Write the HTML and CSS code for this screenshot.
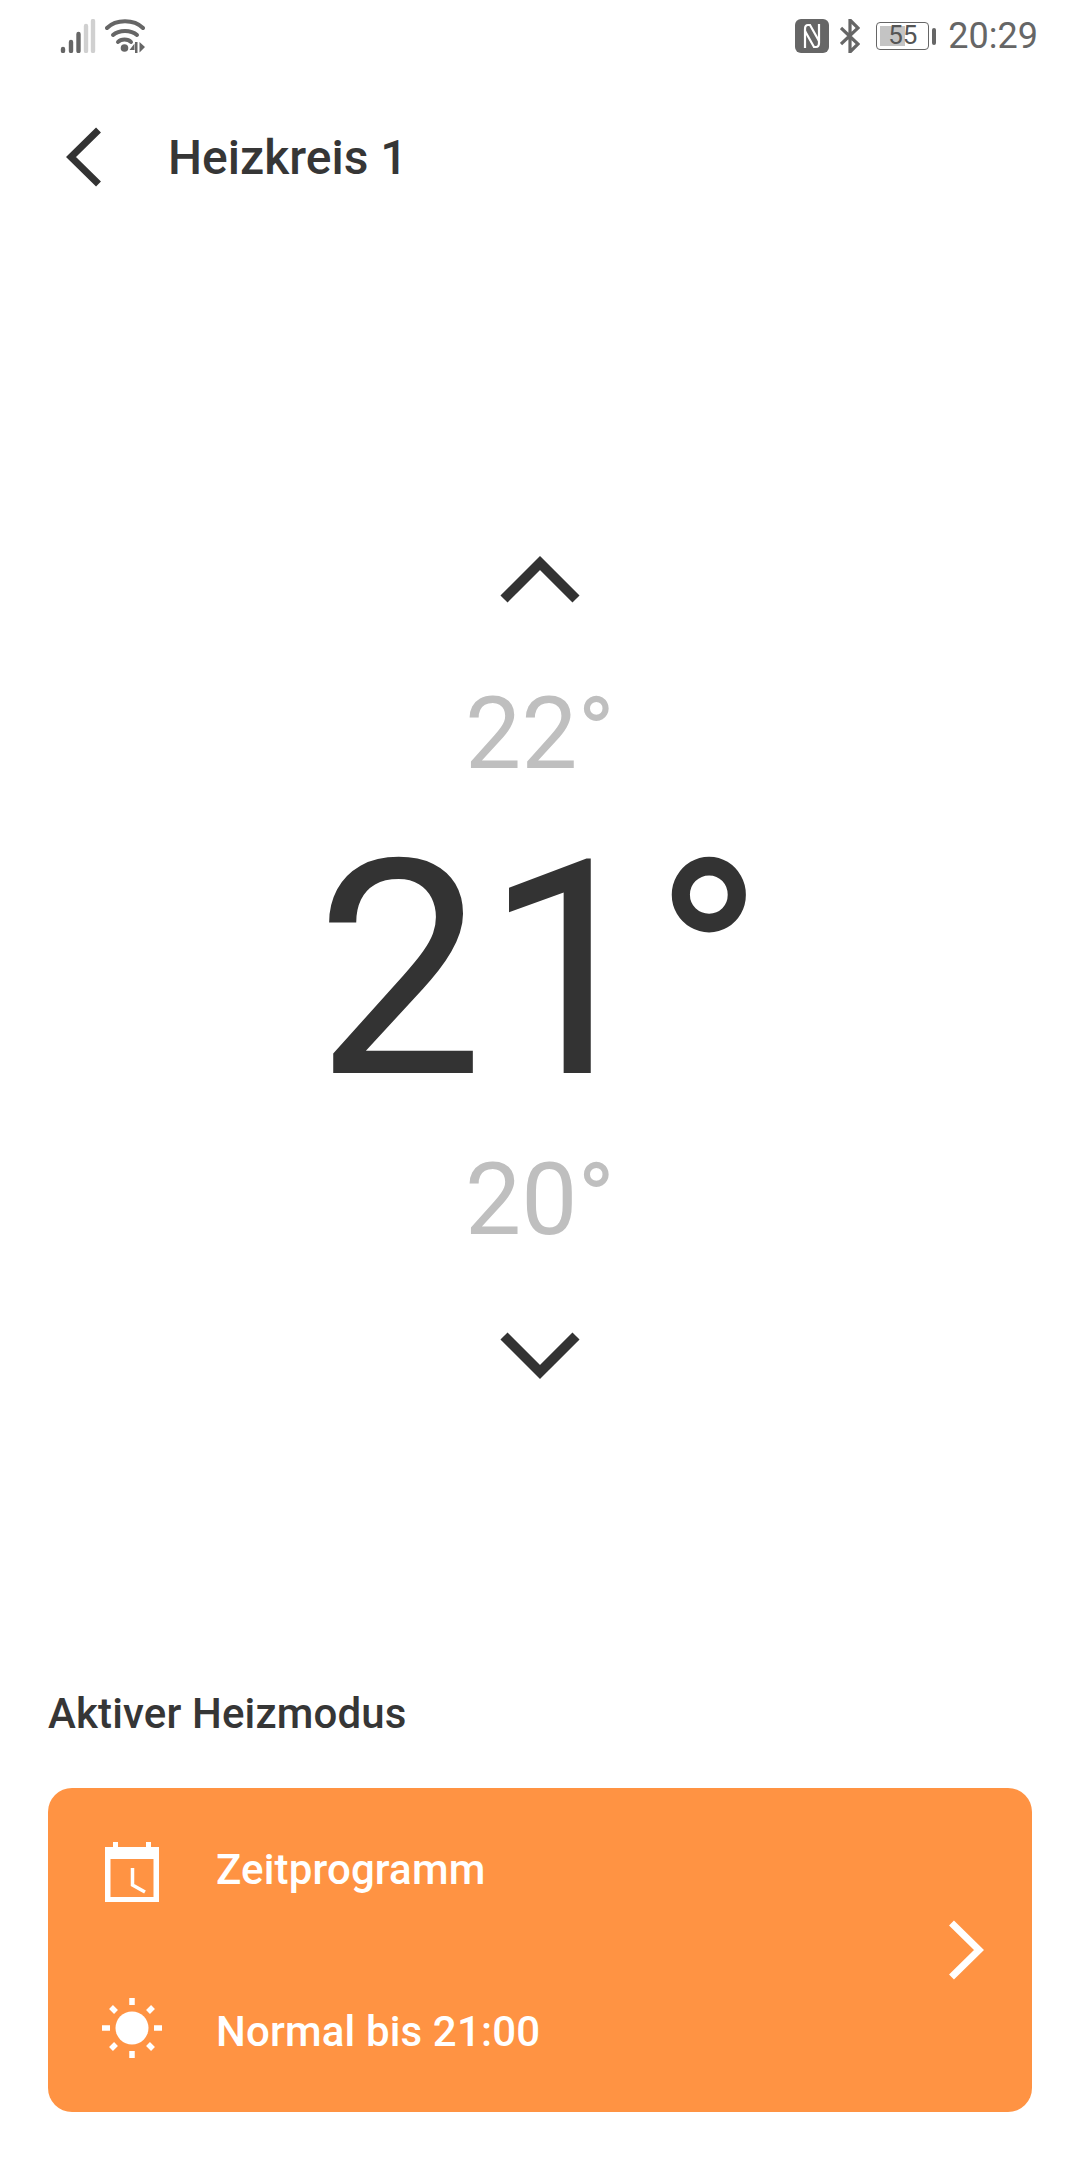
FILE: index.html
```html
<!DOCTYPE html>
<html lang="de">
<head>
  <meta charset="UTF-8" />
  <title>Heizkreis 1</title>
  <link rel="stylesheet" href="styles.css">
</head>
<body>

<div class="status-bar">
  <div class="status-left">
    <svg class="icon-signal" width="36" height="34" viewBox="0 0 36 34">
      <g fill="none" stroke-width="4.4" stroke-linecap="round">
        <path d="M3 30v2" stroke="#666"/>
        <path d="M11 23v9" stroke="#666"/>
        <path d="M18.500 15v17" stroke="#666"/>
        <path d="M26 7v25" stroke="#d0d0d0"/>
        <path d="M33 2v30" stroke="#d0d0d0"/>
      </g>
    </svg>
    <svg class="icon-wifi" width="40" height="34" viewBox="0 0 40 34">
      <g fill="none" stroke="#666" stroke-width="4" stroke-linecap="round">
        <path d="M2 9C11 0 29 0 38 9"/>
        <path d="M8 16C14 10.500 26 10.500 32 16"/>
        <path d="M13 23C16 19.500 23 19.500 26 23"/>
      </g>
      <circle cx="19.500" cy="29" r="3.800" fill="#666"/>
      <path d="M30 23v11h2.500V23zM24.500 31l5-6.500V31zM34.500 23l5.500 5-5.500 5.500z" fill="#666"/>
    </svg>
  </div>
  <div class="status-right">
    <svg width="34" height="34" viewBox="0 0 34 34">
      <rect width="34" height="34" rx="6" fill="#666"/>
      <g fill="none" stroke="#fff" stroke-width="2.200">
        <path d="M10 29V10Q10 6 13 6h2l9 16"/>
        <path d="M24 5v19q0 4-3 4h-2l-9-16"/>
      </g>
    </svg>
    <svg class="icon-bt" width="20" height="34" viewBox="0 0 20 34">
      <path d="M1 9l17 16-8 8V1l8 8L1 25" fill="none" stroke="#666" stroke-width="3.200"/>
    </svg>
    <div class="battery">
      <div class="battery-body">
        <div class="battery-fill" style="width: 55%"></div>
        <span class="battery-text">55</span>
      </div>
      <div class="battery-cap"></div>
    </div>
    <span class="clock">20:29</span>
  </div>
</div>

<header class="title-bar">
  <svg width="36" height="60" viewBox="0 0 36 60">
    <path d="M32.500 3L5 30l27.500 27" fill="none" stroke="#333" stroke-width="7"/>
  </svg>
  <h1>Heizkreis 1</h1>
</header>

<main class="picker">
  <svg class="arrow" width="80" height="50" viewBox="0 0 80 50">
    <path d="M4 45L40 9l36 36" fill="none" stroke="#333" stroke-width="10"/>
  </svg>
  <div class="temp-small temp-next">22°</div>
  <div class="temp-main">21°</div>
  <div class="temp-small temp-prev">20°</div>
  <svg class="arrow arrow-down" width="80" height="48" viewBox="0 0 80 48">
    <path d="M4 4l36 36L76 4" fill="none" stroke="#333" stroke-width="10"/>
  </svg>
</main>

<section class="mode">
  <h2>Aktiver Heizmodus</h2>
  <div class="mode-card">
    <div class="mode-rows">
      <div class="mode-row">
        <div class="mode-icon">
          <svg width="54" height="60" viewBox="0 0 54 60">
            <path d="M8 0h5v5h28V0h5v5h8v55H0V5h8z M5.500 17v38h43V17z" fill="#fff" fill-rule="evenodd"/>
            <path d="M27.500 26v17l12.500 7" fill="none" stroke="#fff" stroke-width="3.500"/>
          </svg>
        </div>
        <span class="mode-label-top">Zeitprogramm</span>
      </div>
      <div class="mode-row">
        <div class="mode-icon">
          <svg width="60" height="60" viewBox="0 0 60 60">
            <circle cx="30" cy="30" r="16.500" fill="#fff"/>
            <g fill="none" stroke="#fff" stroke-width="5.500">
              <path d="M30 0v7M30 53v7M0 30h8M52 30h8"/>
              <path d="M9 9l5 5M46 46l5 5M51 9l-5 5M14 46l-5 5"/>
            </g>
          </svg>
        </div>
        <span class="mode-label-bottom">Normal bis 21:00</span>
      </div>
    </div>
    <svg class="mode-go" width="36" height="60" viewBox="0 0 36 60">
      <path d="M3.500 3L31 30 3.500 57" fill="none" stroke="#fff" stroke-width="7"/>
    </svg>
  </div>
</section>

</body>
</html>
```

FILE: styles.css
```css
* {
  box-sizing: border-box;
  margin: 0;
  padding: 0;
}

body {
  width: 1080px;
  height: 2160px;
  background: #fff;
  color: #333;
  font-family: Roboto, sans-serif;
  overflow: hidden;
}

.status-bar {
  height: 60px;
  padding: 19px 42px 0 60px;
  display: flex;
  justify-content: space-between;
  align-items: flex-start;
}

.status-left, .status-right {
  display: flex;
  align-items: center;
}

.icon-wifi {
  margin-left: 9px;
}

.icon-bt {
  margin-left: 11px;
}

.battery {
  display: flex;
  align-items: center;
  margin-left: 16px;
  gap: 3px;
}

.battery-body {
  position: relative;
  width: 53px;
  height: 28px;
  border: 1.500px solid #666;
  border-radius: 4px;
  padding: 3px;
}

.battery-fill {
  height: 100%;
  background: #c4c4c4;
}

.battery-text {
  position: absolute;
  inset: 0;
  text-align: center;
  font-size: 26px;
  line-height: 25px;
  color: #555;
}

.battery-cap {
  width: 4px;
  height: 17px;
  background: #666;
  border-radius: 2px;
}

.clock {
  margin-left: 12px;
  font-size: 36px;
  line-height: 34px;
  color: #666;
}

.title-bar {
  height: 194px;
  padding-left: 66px;
  display: flex;
  align-items: center;
}

.title-bar h1 {
  margin-left: 66px;
  font-size: 48px;
  font-weight: 500;
  color: #363636;
}

.picker {
  padding-top: 300px;
  display: flex;
  flex-direction: column;
  align-items: center;
}

.temp-small {
  font-size: 100px;
  line-height: 118px;
  color: #bfbfbf;
}

.temp-next {
  margin-top: 71px;
}

.temp-main {
  margin-top: 8px;
  font-size: 300px;
  line-height: 340px;
  color: #333;
}

.arrow-down {
  margin-top: 73px;
}

.mode {
  margin-top: 310px;
  padding: 0 48px;
}

.mode h2 {
  font-size: 42px;
  font-weight: 500;
  line-height: 48px;
  letter-spacing: 0.15px;
  color: #363636;
}

.mode-card {
  margin-top: 50px;
  height: 324px;
  padding: 0 48px 0 54px;
  background: #ff9343;
  border-radius: 24px;
  color: #fff;
  display: flex;
  justify-content: space-between;
  align-items: center;
}

.mode-rows {
  display: flex;
  flex-direction: column;
  gap: 96px;
}

.mode-row {
  display: flex;
  align-items: center;
  height: 60px;
  font-size: 42px;
  font-weight: 500;
  letter-spacing: 0.15px;
}

.mode-icon {
  width: 60px;
  display: flex;
  justify-content: center;
}

.mode-row span {
  margin-left: 54px;
}

.mode-label-top {
  margin-bottom: 5px;
}

.mode-label-bottom {
  margin-top: 7px;
}
```
